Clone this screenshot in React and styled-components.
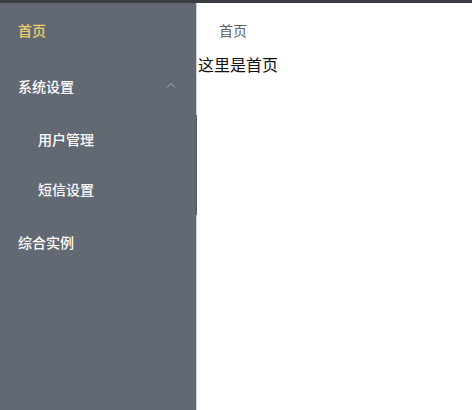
import React from "react";
import styled, { createGlobalStyle } from "styled-components";

const Global = createGlobalStyle`
  html, body { margin: 0; padding: 0; height: 100%; }
  body { font-family: "Helvetica Neue", "Noto Sans CJK SC", "Noto Sans", sans-serif; background: #fff; }
  #root { height: 100%; }
`;

const Page = styled.div`
  display: flex;
  flex-direction: column;
  height: 410px;
`;

const TopBar = styled.div`
  height: 3px;
  background: #3b3e43;
  flex: none;
`;

const Body = styled.div`
  display: flex;
  flex: 1;
  min-height: 0;
`;

const Sidebar = styled.ul`
  list-style: none;
  margin: 0;
  padding: 0;
  width: 196px;
  flex: none;
  background: #636973;
  border-right: 1px solid #cfd1d4;
`;

const Item = styled.li`
  height: ${(p) => (p.$sub ? 50 : 56)}px;
  display: flex;
  align-items: center;
  justify-content: space-between;
  padding: 0 20px 2px ${(p) => (p.$sub ? 38 : 18)}px;
  box-sizing: border-box;
  font-size: 14px;
  font-weight: 500;
  color: ${(p) => (p.$active ? "#f0cf6a" : "#ffffff")};
  cursor: pointer;
`;

const SubList = styled.ul`
  list-style: none;
  margin: 0 -1px 0 0;
  padding: 0;
  border-right: 1px solid #555b63;
`;

const Chevron = styled.svg`
  width: 10px;
  height: 6px;
  margin-top: -2px;
`;

const Main = styled.main`
  flex: 1;
  padding: 0 0 0 1px;
`;

const Breadcrumb = styled.div`
  padding: 17px 0 0 21px;
  height: 20px;
  line-height: 20px;
  font-size: 14px;
  color: #606266;
`;

const Content = styled.div`
  margin-top: 13px;
  font-size: 16px;
  line-height: 22px;
  color: #111;
`;

export default function App() {
  return (
    <Page>
      <Global />
      <TopBar />
      <Body>
        <Sidebar>
          <Item $active>首页</Item>
          <li>
            <Item as="div">
              系统设置
              <Chevron viewBox="0 0 10 6">
                <path d="M1 5.5 L5 1.5 L9 5.5" fill="none" stroke="#a9adb3" strokeWidth="1" />
              </Chevron>
            </Item>
            <SubList>
              <Item $sub>用户管理</Item>
              <Item $sub>短信设置</Item>
            </SubList>
          </li>
          <Item>综合实例</Item>
        </Sidebar>
        <Main>
          <Breadcrumb>首页</Breadcrumb>
          <Content>这里是首页</Content>
        </Main>
      </Body>
    </Page>
  );
}
